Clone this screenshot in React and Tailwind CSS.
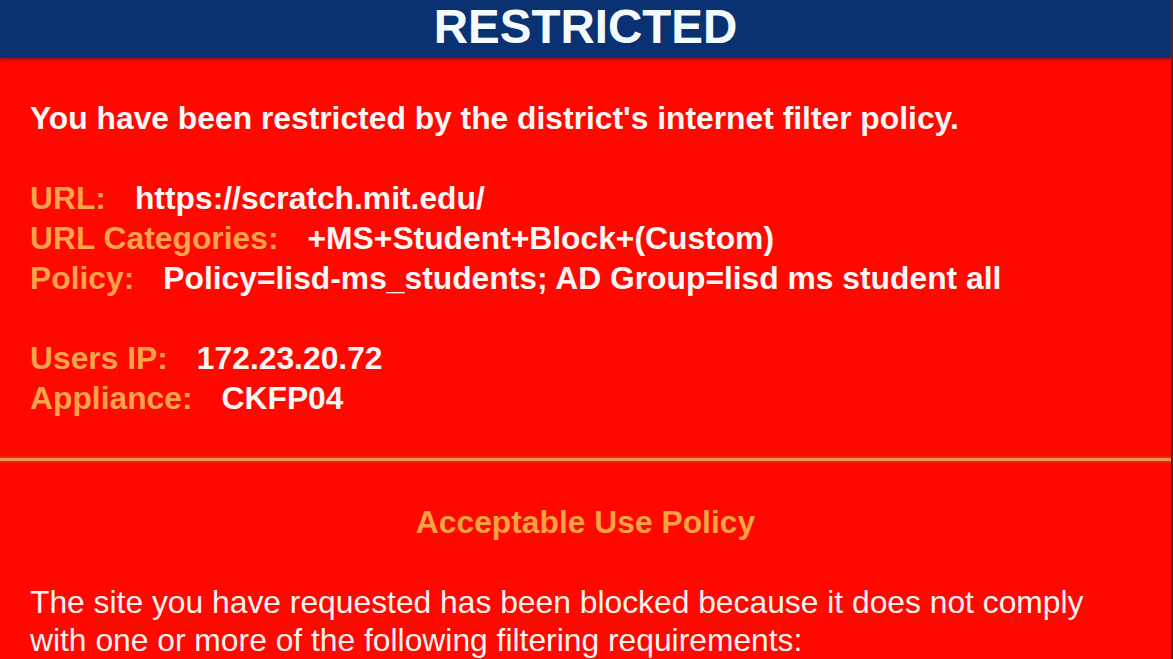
// Block page shown by the district web filter
const details = [
  [
    ["URL:", "https://scratch.mit.edu/"],
    ["URL Categories:", "+MS+Student+Block+(Custom)"],
    ["Policy:", "Policy=lisd-ms_students; AD Group=lisd ms student all"],
  ],
  [
    ["Users IP:", "172.23.20.72"],
    ["Appliance:", "CKFP04"],
  ],
];

function DetailRow({ label, value }) {
  return (
    <div className="whitespace-nowrap">
      <span className="text-[#fba24c]">{label}</span>
      <span className="ml-[29px] text-[#fff6f6]">{value}</span>
    </div>
  );
}

export default function App() {
  return (
    <div
      className="min-h-screen overflow-hidden bg-[#ff0800] border-r-2 border-[#6a1c18]"
      style={{ fontFamily: '"Liberation Sans", Arial, sans-serif' }}
    >
      {/* title bar */}
      <header className="relative h-[58px] bg-[#0a3172] text-center shadow-[0_2px_3px_rgba(90,20,40,0.6)]">
        <h1 className="text-[47.5px] font-bold leading-[54px] text-[#f4fbff]">
          RESTRICTED
        </h1>
      </header>

      {/* request details */}
      <section className="px-[30px] pt-10 text-[31.8px] font-bold leading-10">
        <p className="whitespace-nowrap text-[#fff6f6]">
          You have been restricted by the district's internet filter policy.
        </p>
        {details.map((group, i) => (
          <div key={i} className="mt-10">
            {group.map(([label, value]) => (
              <DetailRow key={label} label={label} value={value} />
            ))}
          </div>
        ))}
      </section>

      <div className="mt-[38px] h-[7px] border-y-2 border-[#d92c0e] bg-[#ff8d4e]" />

      {/* policy notice */}
      <section className="px-[30px] pt-[39px]">
        <h2 className="text-center text-[31.8px] font-bold leading-10 text-[#f9a242]">
          Acceptable Use Policy
        </h2>
        <p className="mt-[41px] text-[31.8px] leading-[38px] text-[#fff2f2]">
          The site you have requested has been blocked because it does not comply
          <br />
          with one or more of the following filtering requirements:
        </p>
      </section>
    </div>
  );
}
